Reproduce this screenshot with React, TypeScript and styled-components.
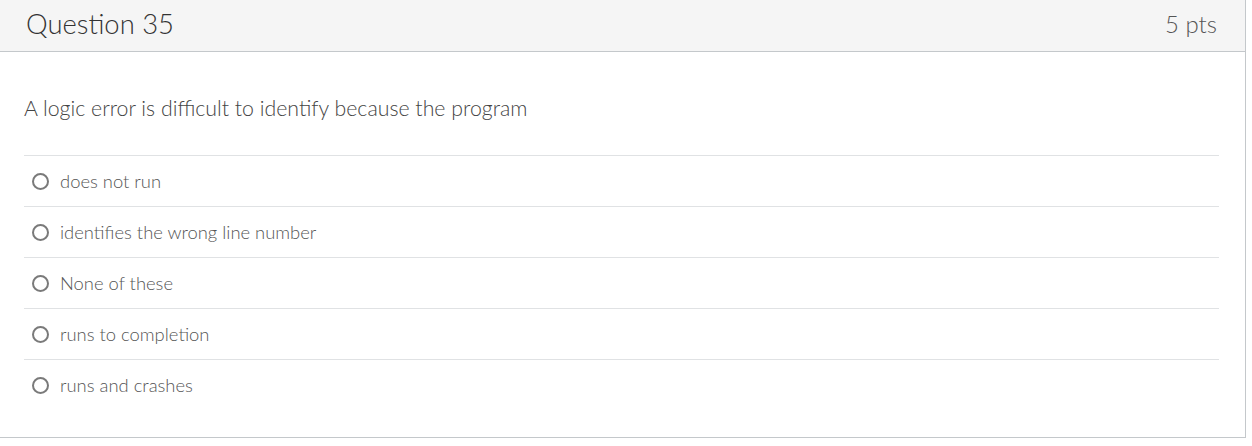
import React from "react";
import styled, { createGlobalStyle } from "styled-components";

const Global = createGlobalStyle`
  html, body { margin: 0; padding: 0; background: #fff; }
  body { font-family: Lato, "Noto Sans", sans-serif; }
`;

const Card = styled.section`
  margin: -1px 0 0 -1px;
  width: 1247px;
  border: 1px solid #c4c8cb;
  background: #fff;
  box-sizing: border-box;
`;

const Header = styled.header`
  height: 52px;
  box-sizing: border-box;
  background: #f5f5f5;
  border-bottom: 1px solid #c4c8cb;
  display: flex;
  align-items: center;
  justify-content: space-between;
  padding: 0 28px 5px 26px;
`;

const Title = styled.h2`
  margin: 0;
  font-size: 27.4px;
  font-weight: 300;
  color: #333;
`;

const Points = styled.span`
  font-size: 24px;
  font-weight: 300;
  color: #555;
`;

const Body = styled.div`
  padding: 0 26px 27px 24px;
`;

const Prompt = styled.p`
  margin: 0;
  height: 103px;
  display: flex;
  align-items: center;
  padding-top: 8px;
  box-sizing: border-box;
  font-size: 21.3px;
  font-weight: 300;
  color: #444;
`;

const Answers = styled.ul`
  list-style: none;
  margin: 0;
  padding: 0;
`;

const Answer = styled.li`
  height: 51px;
  box-sizing: border-box;
  border-top: 1px solid #e0e2e4;
  display: flex;
  align-items: center;
  gap: 11px;
  padding-left: 8px;
  font-size: 18.4px;
  font-weight: 300;
  color: #555;
`;

const Radio = styled.span`
  width: 13px;
  height: 13px;
  border: 2px solid #7a7a7a;
  border-radius: 50%;
  flex: none;
`;

const answers = [
  "does not run",
  "identifies the wrong line number",
  "None of these",
  "runs to completion",
  "runs and crashes",
];

export default function App() {
  return (
    <>
      <Global />
      <Card>
        <Header>
          <Title>Question 35</Title>
          <Points>5 pts</Points>
        </Header>
        <Body>
          <Prompt>A logic error is difficult to identify because the program</Prompt>
          <Answers>
            {answers.map((a) => (
              <Answer key={a}>
                <Radio />
                {a}
              </Answer>
            ))}
          </Answers>
        </Body>
      </Card>
    </>
  );
}
